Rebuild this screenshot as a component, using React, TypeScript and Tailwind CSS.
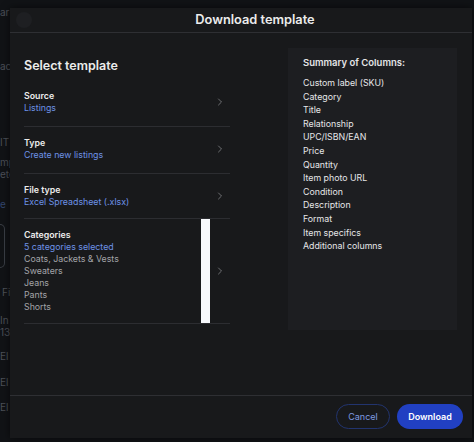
import { ChevronRight } from 'lucide-react';

const COLUMNS = [
  'Custom label (SKU)',
  'Category',
  'Title',
  'Relationship',
  'UPC/ISBN/EAN',
  'Price',
  'Quantity',
  'Item photo URL',
  'Condition',
  'Description',
  'Format',
  'Item specifics',
  'Additional columns',
];

const CATEGORIES = ['Coats, Jackets & Vests', 'Sweaters', 'Jeans', 'Pants', 'Shorts'];

function Row({ label, value, children, bar, pb }: { label: string; value: string; children?: React.ReactNode; bar?: boolean; pb: string }) {
  return (
    <div className={`flex items-stretch border-b border-[#2c2d31] pt-[10px] ${pb}`}>
      <div className="flex-1 text-[8.8px] leading-[12px]">
        <div className="font-semibold text-[#ececec]">{label}</div>
        <div className="text-[#6d92e6]">{value}</div>
        {children}
      </div>
      {bar && <div className="w-[9px] bg-[#f7f9fc] -mt-[10px] -mb-[10px]" />}
      <div className="w-[20px] flex items-center justify-center">
        <ChevronRight size={12} strokeWidth={1.5} className="text-[#8a8b8f]" />
      </div>
    </div>
  );
}

export default function App() {
  return (
    <div className="relative w-[474px] h-[442px] overflow-hidden bg-[#111316]" style={{ fontFamily: 'Inter, "Noto Sans", sans-serif' }}>
      {/* page behind the dialog */}
      <div className="flex flex-col text-[10px] leading-[12px] text-[#4c5058]">
        <div className="h-[6px]" />
        <div>ar</div>
        <div className="h-[42px]" />
        <div>ac</div>
        <div className="h-[64px]" />
        <div>IT</div>
        <div className="h-[8px]" />
        <div>mp</div>
        <div>ete</div>
        <div className="h-[18px]" />
        <div className="text-[#33466e]">e</div>
        <div className="h-[14px]" />
        <div className="h-[44px] w-[5px] rounded-r-md border border-l-0 border-[#3a3e45]" />
        <div className="h-[18px]" />
        <div className="pl-[2px]">Fi</div>
        <div className="h-[16px]" />
        <div>In</div>
        <div>13</div>
        <div className="h-[12px]" />
        <div>El</div>
        <div className="h-[14px]" />
        <div>El</div>
        <div className="h-[13px]" />
        <div>El</div>
      </div>

      {/* dialog */}
      <div className="absolute left-[10px] top-[8px] w-[462px] h-[430px] bg-[#18191b] flex flex-col shadow-[0_0_8px_rgba(0,0,0,0.6)]">
        <div className="h-[25px] flex items-center border-b border-[#2e2f33]">
          <div className="w-[28px] h-[25px] flex items-center justify-center">
            <div className="w-[16px] h-[16px] rounded-full bg-[#1e1f22]" />
          </div>
          <div className="flex-1 text-center text-[12.8px] font-semibold text-[#ececec]">Download template</div>
        </div>

        <div className="flex-1 flex pl-[14px] pr-[15px]">
          <div className="w-[206px] pt-[23px]">
            <div className="text-[12.5px] leading-[20px] font-semibold text-[#ececec] mb-[4px]">Select template</div>
            <Row label="Source" value="Listings" pb="pb-[12px]" />
            <Row label="Type" value="Create new listings" pb="pb-[12px]" />
            <Row label="File type" value="Excel Spreadsheet (.xlsx)" pb="pb-[10px]" />
            <Row label="Categories" value="5 categories selected" bar pb="pb-[10px]">
              {CATEGORIES.map((c) => (
                <div key={c} className="text-[#a3a4a8]">{c}</div>
              ))}
            </Row>
          </div>
          <div className="flex-1" />
          <div className="w-[169px] mt-[15px] h-[282px] bg-[#1d1e21] pl-[15px] pt-[9px]">
            <div className="text-[9.5px] leading-[12px] font-semibold text-[#e4e4e6] mb-[7px]">Summary of Columns:</div>
            {COLUMNS.map((c) => (
              <div key={c} className="text-[8.8px] leading-[13.6px] text-[#e6e6e8]">{c}</div>
            ))}
          </div>
        </div>

        <div className="h-[43px] border-t border-[#2e2f33] flex items-start justify-end gap-[7px] pr-[9px] pt-[8px]">
          <button className="h-[25px] w-[54px] rounded-full border border-[#22346e] text-[9px] text-[#7e9be0]">Cancel</button>
          <button className="h-[25px] w-[66px] rounded-full bg-[#2140c2] text-[9px] font-semibold text-white">Download</button>
        </div>
      </div>
    </div>
  );
}
